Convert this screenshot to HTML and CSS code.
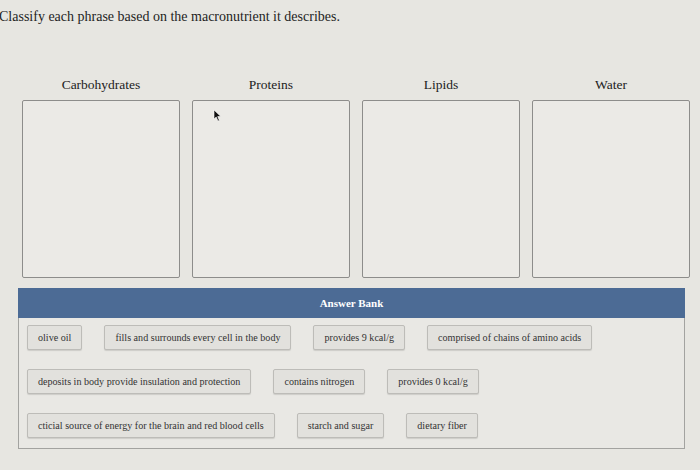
FILE: index.html
```html
<!DOCTYPE html>
<html lang="en">
<head>
    <meta charset="UTF-8">
    <title>Macronutrients</title>
    <link rel="stylesheet" href="styles.css">
</head>
<body>
    <p class="prompt">Classify each phrase based on the macronutrient it describes.</p>

    <div class="bins">
        <div class="bin">
            <div class="bin-label">Carbohydrates</div>
            <div class="bin-drop"></div>
        </div>
        <div class="bin">
            <div class="bin-label">Proteins</div>
            <div class="bin-drop"></div>
        </div>
        <div class="bin">
            <div class="bin-label">Lipids</div>
            <div class="bin-drop"></div>
        </div>
        <div class="bin">
            <div class="bin-label">Water</div>
            <div class="bin-drop"></div>
        </div>
    </div>

    <div class="bank">
        <div class="bank-head">Answer Bank</div>
        <div class="bank-body">
            <div class="bank-row">
                <span class="chip">olive oil</span>
                <span class="chip">fills and surrounds every cell in the body</span>
                <span class="chip">provides 9 kcal/g</span>
                <span class="chip">comprised of chains of amino acids</span>
            </div>
            <div class="bank-row">
                <span class="chip">deposits in body provide insulation and protection</span>
                <span class="chip">contains nitrogen</span>
                <span class="chip">provides 0 kcal/g</span>
            </div>
            <div class="bank-row">
                <span class="chip">cticial source of energy for the brain and red blood cells</span>
                <span class="chip">starch and sugar</span>
                <span class="chip">dietary fiber</span>
            </div>
        </div>
    </div>

    <!-- mouse pointer -->
    <svg class="pointer" width="9" height="13" viewBox="0 0 9 13">
        <path d="M1 1 L1 10 L3.2 8 L5 12 L6.4 11.4 L4.7 7.5 L7.8 7.5 Z" fill="#111" stroke="#fff" stroke-width="0.6"/>
    </svg>
</body>
</html>
```

FILE: styles.css
```css
body {
    margin: 0;
    background: #e7e6e1;
    font-family: "Liberation Serif", "Times New Roman", serif;
    color: #222;
    position: relative;
    height: 470px;
    overflow: hidden;
}
.prompt {
    margin: 0;
    padding-top: 9px;
    text-indent: -1px;
    font-size: 14px;
    color: #1e1e1e;
}
.bins {
    display: flex;
    gap: 12px;
    margin: 52px 0 0 22px;
    width: 668px;
}
.bin {
    flex: 1;
    display: flex;
    flex-direction: column;
}
.bin-label {
    text-align: center;
    font-size: 13.5px;
    height: 19px;
    margin-bottom: 4px;
    color: #222;
}
.bin-drop {
    height: 176px;
    border: 1.5px solid #8d8d8b;
    border-radius: 2px;
    background: #ebeae6;
}
.bank {
    margin: 10px 0 0 18px;
    width: 667px;
}
.bank-head {
    height: 30px;
    line-height: 30px;
    background: #4c6b95;
    color: #fff;
    font-size: 11px;
    font-weight: bold;
    text-align: center;
}
.bank-body {
    border: 1px solid #a3a3a0;
    border-top: none;
    background: #e9e8e4;
    padding: 7px 8px 10px;
    display: flex;
    flex-direction: column;
    gap: 19px;
}
.bank-row {
    display: flex;
    gap: 22px;
}
.chip {
    height: 23px;
    line-height: 23px;
    padding: 0 10px;
    border: 1px solid #bdbcb8;
    border-radius: 2px;
    background: #e2e1dd;
    box-shadow: 0 1px 1px rgba(0, 0, 0, 0.12);
    font-size: 10.1px;
    color: #333;
    white-space: nowrap;
}
.pointer {
    position: absolute;
    left: 213px;
    top: 109px;
}
```
